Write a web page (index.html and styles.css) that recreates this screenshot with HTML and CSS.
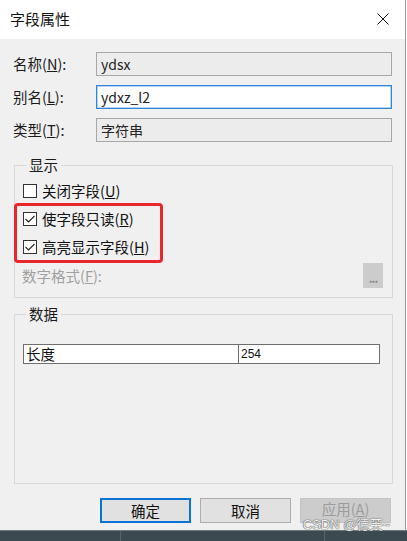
FILE: index.html
```html
<!DOCTYPE html>
<html lang="zh-CN">
<head>
<meta charset="utf-8">
<title>字段属性</title>
<link rel="stylesheet" href="styles.css">
</head>
<body>
<div class="screen">
  <div class="window">
    <div class="titlebar">
      <span class="title">字段属性</span>
      <svg class="close" width="12" height="12" viewBox="0 0 12 12"><path d="M0.5 0.5 L11.5 11.5 M11.5 0.5 L0.5 11.5" stroke="#111" stroke-width="1" fill="none"/></svg>
    </div>
    <div class="content">
      <div class="rows">
        <div class="row">
          <span class="label">名称(<u>N</u>):</span>
          <div class="input disabled">ydsx</div>
        </div>
        <div class="row">
          <span class="label">别名(<u>L</u>):</span>
          <div class="input focused">ydxz_l2</div>
        </div>
        <div class="row">
          <span class="label">类型(<u>T</u>):</span>
          <div class="input disabled cjk">字符串</div>
        </div>
      </div>

      <fieldset class="group group-display">
        <legend>显示</legend>
        <div class="check-row">
          <span class="checkbox"></span>
          <span>关闭字段(<u>U</u>)</span>
        </div>
        <div class="highlight">
          <div class="check-row">
            <span class="checkbox"><svg width="12" height="12" viewBox="0 0 12 12"><path d="M1.5 6 L4.5 9 L10.5 3" stroke="#222" stroke-width="1.1" fill="none"/></svg></span>
            <span>使字段只读(<u>R</u>)</span>
          </div>
          <div class="check-row">
            <span class="checkbox"><svg width="12" height="12" viewBox="0 0 12 12"><path d="M1.5 6 L4.5 9 L10.5 3" stroke="#222" stroke-width="1.1" fill="none"/></svg></span>
            <span>高亮显示字段(<u>H</u>)</span>
          </div>
        </div>
        <div class="format-row">
          <span class="muted">数字格式(<u>F</u>):</span>
          <span class="dots-btn">...</span>
        </div>
      </fieldset>

      <fieldset class="group group-data">
        <legend>数据</legend>
        <div class="table">
          <div class="cell key">长度</div>
          <div class="cell val">254</div>
        </div>
      </fieldset>

      <div class="buttons">
        <div class="btn default">确定</div>
        <div class="btn">取消</div>
        <div class="btn disabled-btn"><span class="btn-text">应用(<u>A</u>)</span></div>
      </div>
      <span class="watermark">CSDN @德芙~</span>
    </div>
  </div>
  <div class="taskbar">
    <span class="seg seg1"></span>
    <span class="seg seg2"></span>
    <span class="seg seg3"></span>
  </div>
</div>
</body>
</html>
```

FILE: styles.css
```css
html, body {
  margin: 0;
  padding: 0;
  background: #ffffff;
}
body {
  font-family: "Noto Sans CJK SC", "Noto Sans", sans-serif;
  color: #111;
  font-size: 14px;
  line-height: 20px;
}
u {
  text-decoration: underline;
  text-underline-offset: 1px;
}
.screen {
  width: 407px;
  height: 541px;
  display: flex;
  flex-direction: column;
}
.window {
  width: 405px;
  height: 530px;
  border-right: 1px solid #9a9a9a;
  display: flex;
  flex-direction: column;
}
.titlebar {
  height: 39px;
  background: #ffffff;
  display: flex;
  align-items: center;
  justify-content: space-between;
  padding: 0 16px 1px 10px;
  box-sizing: border-box;
}
.title {
  font-size: 15px;
  color: #111;
}
.content {
  flex: 1;
  background: #f0f0f0;
  display: flex;
  flex-direction: column;
  position: relative;
}
.rows {
  display: flex;
  flex-direction: column;
  gap: 9px;
  padding: 13px 13px 0 13px;
}
.row {
  display: flex;
  align-items: center;
  height: 24px;
}
.label {
  width: 83px;
  font-size: 14.5px;
  color: #1a1a1a;
}
.input {
  width: 296px;
  height: 24px;
  box-sizing: border-box;
  padding: 0 4px;
  font-size: 14px;
  line-height: 22px;
  color: #222;
}
.input.disabled {
  background: #ececec;
  border: 1px solid #a8a8a8;
}
.input.focused {
  background: #ffffff;
  border: 1px solid #2f86d9;
  box-shadow: inset 0 0 0 0.5px #6ab0ec;
}
.group {
  margin: 13px 12px 0 14px;
  border: 1px solid #d8d8d8;
  padding: 6px 9px 9px 8px;
  min-width: 0;
}
.group legend {
  padding: 0 3px;
  margin-left: 3px;
  font-size: 14.5px;
  line-height: 20px;
  color: #1a1a1a;
}
.check-row {
  display: flex;
  align-items: center;
  height: 20px;
  gap: 5px;
  font-size: 14.5px;
  color: #111;
}
.checkbox {
  width: 14px;
  height: 14px;
  box-sizing: border-box;
  border: 1px solid #333;
  background: #ffffff;
  display: flex;
  align-items: center;
  justify-content: center;
}
.highlight {
  margin: 2px 0 0 -9px;
  width: 149px;
  box-sizing: border-box;
  border: 3px solid #e8262b;
  border-radius: 4px;
  padding: 3px 0 3px 6px;
  display: flex;
  flex-direction: column;
  gap: 8px;
}
.format-row {
  display: flex;
  align-items: center;
  justify-content: space-between;
  height: 25px;
}
.muted {
  color: #a0a0a0;
  font-size: 14.5px;
  margin-left: -1px;
}
.dots-btn {
  width: 20px;
  height: 25px;
  background: #cccccc;
  color: #8a8a8a;
  font-size: 12px;
  line-height: 30px;
  font-weight: bold;
  text-align: center;
  letter-spacing: -1px;
}
.group-data {
  margin-top: 6px;
  padding: 20px 12px 119px 8px;
}
.table {
  display: flex;
  height: 20px;
  box-sizing: border-box;
  border: 1px solid #6e6e6e;
  background: #ffffff;
}
.cell {
  height: 18px;
  line-height: 18px;
}
.key {
  width: 212px;
  border-right: 1px solid #6e6e6e;
  padding-left: 2px;
  font-size: 14.5px;
  color: #111;
}
.val {
  flex: 1;
  padding-left: 2px;
  font-size: 12px;
  font-family: "Liberation Sans", sans-serif;
  color: #111;
}
.buttons {
  display: flex;
  justify-content: flex-end;
  gap: 9px;
  padding: 14px 14px 0 0;
}
.btn {
  width: 91px;
  height: 25px;
  box-sizing: border-box;
  background: #e1e1e1;
  border: 1px solid #adadad;
  display: flex;
  align-items: center;
  justify-content: center;
  font-size: 14.5px;
  color: #111;
}
.btn.default {
  border: 2px solid #0a74d6;
}
.btn.disabled-btn {
  background: #cccccc;
  border-color: #c4c4c4;
  color: #9c9c9c;
  align-items: flex-start;
  padding-top: 2px;
}
.btn-text {
  line-height: 16px;
}
.watermark {
  position: absolute;
  right: 15px;
  bottom: -1px;
  font-family: "Liberation Sans", "Noto Sans CJK SC", sans-serif;
  font-size: 13px;
  line-height: 13px;
  color: #eeeeee;
  text-shadow: 0 0 1px #666, 0 0 1px #666, 0 0 1px #666;
}
.taskbar {
  flex: 1;
  background: #3a4a50;
  border-top: 1px solid #6b7a80;
  display: flex;
}
.seg {
  display: block;
}
.seg1 {
  width: 120px;
}
.seg2 {
  width: 203px;
  border-left: 1px solid #56656b;
}
.seg3 {
  flex: 1;
  border-left: 1px solid #56656b;
}
```
